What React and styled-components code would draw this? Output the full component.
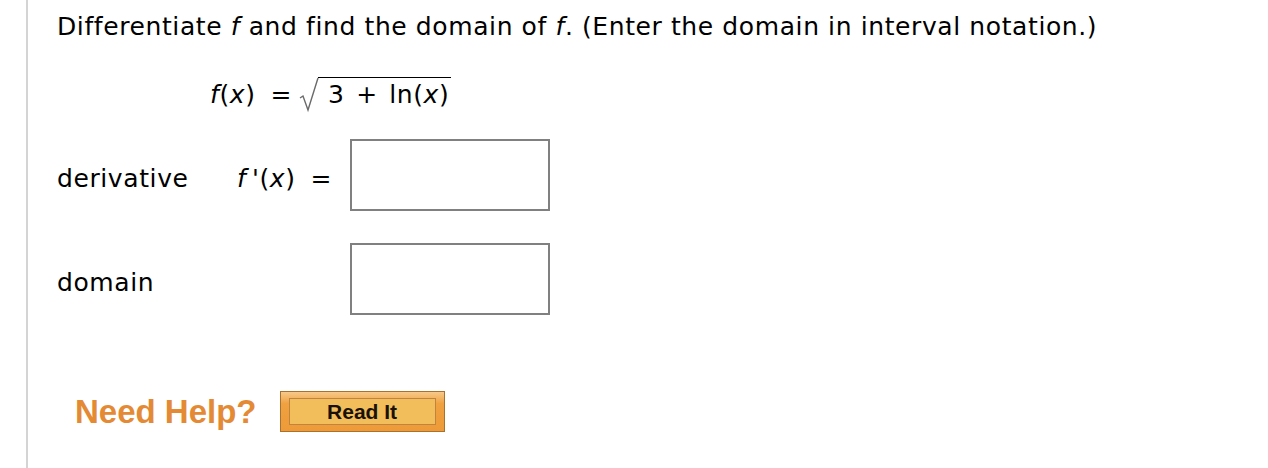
import React from 'react';
import styled, { createGlobalStyle } from 'styled-components';

const GlobalStyle = createGlobalStyle`
  html, body {
    margin: 0;
    padding: 0;
    background: #fff;
  }
  body {
    font-family: 'DejaVu Sans', Verdana, sans-serif;
    color: #000;
  }
`;

const App = () => {
  return (
    <Page>
      <GlobalStyle />
      <Question>
        <Prompt>
          Differentiate <I>f</I> and find the domain of <I>f</I>. (Enter the domain in interval notation.)
        </Prompt>

        <Formula>
          <span>
            <I>f</I>(<I>x</I>)
          </span>
          <Eq $after={7}>=</Eq>
          <Radical>
            <RadicalSign viewBox="0 0 20 36" width="20" height="36">
              <path d="M1 21 L4 19 L9 33 L19 1" fill="none" stroke="#6a6a6a" strokeWidth="1.4" />
            </RadicalSign>
            <Radicand>3 + ln(<I>x</I>)</Radicand>
          </Radical>
        </Formula>

        <AnswerRow>
          <Label>derivative</Label>
          <MathCell>
            <I>f</I>&thinsp;'(<I>x</I>)<Eq>=</Eq>
          </MathCell>
          <AnswerBox />
        </AnswerRow>

        <AnswerRow>
          <Label>domain</Label>
          <MathCell />
          <AnswerBox />
        </AnswerRow>

        <HelpRow>
          <HelpText>Need Help?</HelpText>
          <ReadButton>
            <ReadInner>Read It</ReadInner>
          </ReadButton>
        </HelpRow>
      </Question>
    </Page>
  );
};

export default App;

const Page = styled.div`
  padding-left: 26px;
  height: 468px;
  box-sizing: border-box;
`;

const Question = styled.div`
  border-left: 2px solid #d4d4d4;
  height: 100%;
  padding: 12px 0 0 29px;
  box-sizing: border-box;
  font-size: 25px;
  letter-spacing: 0.6px;
`;

const Prompt = styled.div`
  line-height: 30px;
  white-space: nowrap;
`;

const I = styled.i`
  font-style: italic;
`;

const Formula = styled.div`
  display: flex;
  align-items: flex-end;
  margin: 35px 0 0 153px;
  line-height: 30px;
  white-space: pre;
`;

const Eq = styled.span`
  margin: 0 ${props => props.$after ?? 14}px 0 15px;
`;

const Radical = styled.span`
  display: inline-flex;
  align-items: flex-end;
`;

const RadicalSign = styled.svg`
  display: block;
  margin-bottom: -3px;
`;

const Radicand = styled.span`
  border-top: 1.5px solid #000;
  padding: 2px 2px 0 10px;
  margin-left: -1px;
  word-spacing: 3px;
`;

const AnswerRow = styled.div`
  display: flex;
  align-items: flex-start;
  height: 72px;
  margin-top: 29px;

  & + & {
    margin-top: 32px;
  }
`;

const Label = styled.div`
  width: 180px;
  line-height: 30px;
  margin-top: 25px;
`;

const MathCell = styled.div`
  width: 113px;
  white-space: pre;
  display: flex;
  line-height: 30px;
  margin-top: 25px;
`;

const AnswerBox = styled.div`
  width: 196px;
  height: 68px;
  border: 2px solid #808080;
`;

const HelpRow = styled.div`
  display: flex;
  align-items: center;
  margin: 76px 0 0 18px;
  letter-spacing: 0;
`;

const HelpText = styled.div`
  font-family: 'Liberation Sans', Arial, sans-serif;
  font-weight: bold;
  font-size: 33px;
  color: #e48a35;
  margin-right: 23px;
`;

const ReadButton = styled.div`
  box-sizing: border-box;
  width: 165px;
  height: 41px;
  padding: 6px 8px;
  border: 1px solid #a8722e;
  background: linear-gradient(#f7c98a, #f0a140 30%, #ee9a38);
  display: flex;
`;

const ReadInner = styled.div`
  flex: 1;
  border: 1px solid #c1843e;
  background: #f2bd5b;
  font-family: 'Liberation Sans', Arial, sans-serif;
  font-weight: bold;
  font-size: 21px;
  color: #1a1208;
  display: flex;
  align-items: center;
  justify-content: center;
`;
